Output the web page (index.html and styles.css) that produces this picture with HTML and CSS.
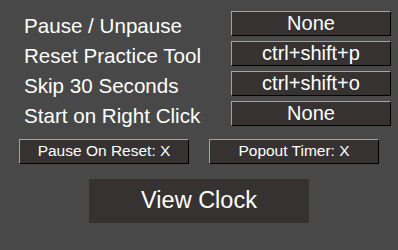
FILE: index.html
```html
<!DOCTYPE html>
<html>
<head>
<meta charset="utf-8">
<link rel="stylesheet" href="styles.css">
</head>
<body>
<div class="panel">
  <div class="binds">
    <div class="label">Pause / Unpause</div>
    <div class="key">None</div>
    <div class="label">Reset Practice Tool</div>
    <div class="key">ctrl+shift+p</div>
    <div class="label">Skip 30 Seconds</div>
    <div class="key">ctrl+shift+o</div>
    <div class="label">Start on Right Click</div>
    <div class="key">None</div>
  </div>
  <div class="toggles">
    <div class="toggle">Pause On Reset: X</div>
    <div class="toggle">Popout Timer: X</div>
  </div>
  <div class="clock-row">
    <div class="clock">View Clock</div>
  </div>
</div>
</body>
</html>
```
FILE: styles.css
```css
html, body {
  margin: 0;
  padding: 0;
  background: #484848;
}
body {
  width: 398px;
  height: 250px;
  overflow: hidden;
  font-family: "Liberation Sans", Arial, sans-serif;
  color: #ffffff;
}
.panel {
  display: flex;
  flex-direction: column;
  padding-top: 11px;
}
.binds {
  display: grid;
  grid-template-columns: 207px 160px;
  grid-auto-rows: 25px;
  row-gap: 5px;
  padding-left: 24px;
}
.label {
  font-size: 20.6px;
  line-height: 25px;
  padding-top: 2px;
  white-space: nowrap;
}
.key {
  box-sizing: border-box;
  background: #363232;
  border-top: 1px solid #a3a3a3;
  border-left: 1px solid #a3a3a3;
  border-bottom: 1px solid #000;
  border-right: 1px solid #000;
  font-size: 20px;
  line-height: 22px;
  text-align: center;
}
.toggles {
  display: flex;
  justify-content: center;
  gap: 20px;
  margin-top: 13px;
}
.toggle {
  box-sizing: border-box;
  width: 170px;
  height: 25px;
  background: #363232;
  border-top: 1px solid #a3a3a3;
  border-left: 1px solid #a3a3a3;
  border-bottom: 1px solid #000;
  border-right: 1px solid #000;
  font-size: 15.5px;
  line-height: 22px;
  text-align: center;
}
.clock-row {
  display: flex;
  justify-content: center;
  margin-top: 15px;
}
.clock {
  width: 220px;
  height: 44px;
  background: #363232;
  font-size: 23.5px;
  line-height: 42px;
  text-align: center;
}
```
